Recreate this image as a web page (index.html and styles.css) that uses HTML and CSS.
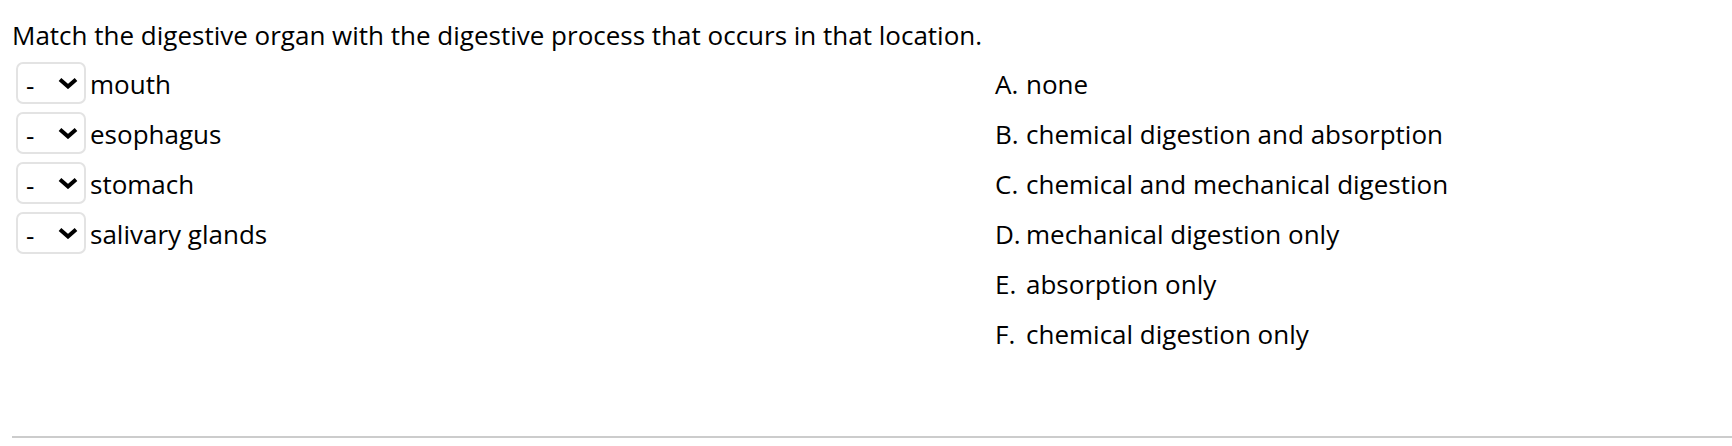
FILE: index.html
```html
<!DOCTYPE html>
<html lang="en">
<head>
<meta charset="utf-8">
<title>Matching question</title>
<link rel="stylesheet" href="styles.css">
</head>
<body>
<div class="question">
  <p class="prompt">Match the digestive organ with the digestive process that occurs in that location.</p>
  <div class="match">
    <div class="left">
      <div class="row">
        <span class="select"><span class="dash">-</span><svg class="chev" width="22" height="12" viewBox="0 0 22 12"><polyline points="3,2.5 11,9.5 19,2.5" fill="none" stroke="#000" stroke-width="4" stroke-linejoin="miter"/></svg></span>
        <span class="term">mouth</span>
      </div>
      <div class="row">
        <span class="select"><span class="dash">-</span><svg class="chev" width="22" height="12" viewBox="0 0 22 12"><polyline points="3,2.5 11,9.5 19,2.5" fill="none" stroke="#000" stroke-width="4" stroke-linejoin="miter"/></svg></span>
        <span class="term">esophagus</span>
      </div>
      <div class="row">
        <span class="select"><span class="dash">-</span><svg class="chev" width="22" height="12" viewBox="0 0 22 12"><polyline points="3,2.5 11,9.5 19,2.5" fill="none" stroke="#000" stroke-width="4" stroke-linejoin="miter"/></svg></span>
        <span class="term">stomach</span>
      </div>
      <div class="row">
        <span class="select"><span class="dash">-</span><svg class="chev" width="22" height="12" viewBox="0 0 22 12"><polyline points="3,2.5 11,9.5 19,2.5" fill="none" stroke="#000" stroke-width="4" stroke-linejoin="miter"/></svg></span>
        <span class="term">salivary glands</span>
      </div>
    </div>
    <div class="right">
      <div class="row"><span class="label">A.</span><span class="answer">none</span></div>
      <div class="row"><span class="label">B.</span><span class="answer">chemical digestion and absorption</span></div>
      <div class="row"><span class="label">C.</span><span class="answer">chemical and mechanical digestion</span></div>
      <div class="row"><span class="label">D.</span><span class="answer">mechanical digestion only</span></div>
      <div class="row"><span class="label">E.</span><span class="answer">absorption only</span></div>
      <div class="row"><span class="label">F.</span><span class="answer">chemical digestion only</span></div>
    </div>
  </div>
  <hr class="rule">
</div>
</body>
</html>
```
FILE: styles.css
```css
html, body {
  margin: 0;
  padding: 0;
  background: #fff;
}
body {
  font-family: "Open Sans", "Liberation Sans", sans-serif;
  font-size: 26px;
  color: #000;
}
.question {
  padding: 17px 0 0 12px;
}
.prompt {
  margin: 0 0 5px 0;
  line-height: 36px;
}
.match {
  display: grid;
  grid-template-columns: 983px auto;
}
.row {
  height: 50px;
  display: flex;
  align-items: center;
}
.right .row {
  position: relative;
  top: 1px;
}
.select {
  box-sizing: border-box;
  width: 70px;
  height: 42px;
  margin-left: 4px;
  border: 2px solid #e3e3e3;
  border-radius: 7px;
  display: flex;
  align-items: center;
  justify-content: space-between;
  padding: 0 5px 0 8px;
  background: #fff;
  flex: none;
}
.dash {
  line-height: 1;
  position: relative;
  top: 2px;
}
.chev {
  display: block;
}
.term {
  margin-left: 4px;
  position: relative;
  top: 1px;
}
.label {
  min-width: 31px;
  display: inline-block;
}
.rule {
  margin: 78px 0 0 0;
  border: 0;
  height: 2px;
  background: #cccccc;
}
```
